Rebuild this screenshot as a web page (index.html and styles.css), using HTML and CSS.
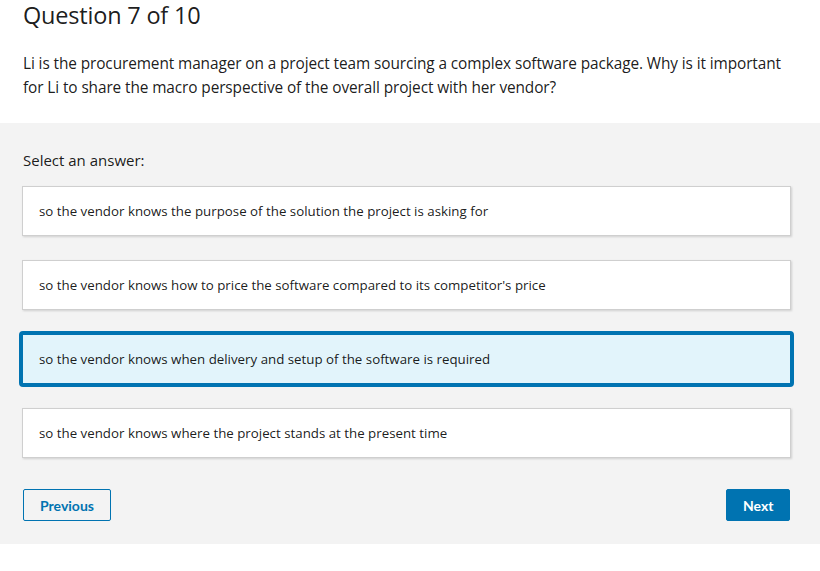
FILE: index.html
```html
<!DOCTYPE html>
<html>
<head>
<meta charset="utf-8">
<link rel="stylesheet" href="styles.css">
</head>
<body>
<header class="head">
  <h1 class="title">Question 7 of 10</h1>
  <p class="question">Li is the procurement manager on a project team sourcing a complex software package. Why is it important for Li to share the macro perspective of the overall project with her vendor?</p>
</header>
<section class="answers">
  <div class="prompt">Select an answer:</div>
  <ul class="options">
    <li class="option">so the vendor knows the purpose of the solution the project is asking for</li>
    <li class="option">so the vendor knows how to price the software compared to its competitor's price</li>
    <li class="option selected">so the vendor knows when delivery and setup of the software is required</li>
    <li class="option">so the vendor knows where the project stands at the present time</li>
  </ul>
  <div class="nav">
    <button class="btn btn-prev">Previous</button>
    <button class="btn btn-next">Next</button>
  </div>
</section>
</body>
</html>
```
FILE: styles.css
```css
html, body {
  margin: 0;
  padding: 0;
  background: #ffffff;
}
body {
  font-family: "Open Sans", "Noto Sans", sans-serif;
  color: rgba(0, 0, 0, 0.9);
  width: 820px;
  height: 571px;
  overflow: hidden;
}
.head {
  padding: 2px 29px 0 23px;
  height: 123px;
  box-sizing: border-box;
}
.title {
  margin: 0;
  font-size: 23.5px;
  font-weight: 400;
  line-height: 26px;
  letter-spacing: -0.2px;
}
.question {
  margin: 24px 0 0 0;
  font-size: 15.4px;
  line-height: 24px;
  letter-spacing: -0.1px;
}
.answers {
  background: #f3f3f3;
  padding: 23px 29px 23px 22px;
  height: 421px;
  box-sizing: border-box;
}
.prompt {
  font-size: 15px;
  line-height: 28px;
  margin: 0 0 12px 1px;
}
.options {
  list-style: none;
  margin: 0;
  padding: 0;
  display: flex;
  flex-direction: column;
  gap: 24px;
}
.option {
  height: 50px;
  box-sizing: border-box;
  background: #ffffff;
  border: 1px solid #cfcfcf;
  box-shadow: 1px 1px 2px rgba(0, 0, 0, 0.15);
  display: flex;
  align-items: center;
  padding: 0 16px;
  font-size: 13.3px;
}
.option.selected {
  background: #e2f4fb;
  border: 4px solid #0073b1;
  border-radius: 4px;
  margin: -3px;
  height: 56px;
  padding: 0 16px;
  box-shadow: none;
}
.nav {
  display: flex;
  justify-content: space-between;
  margin-top: 31px;
  padding-left: 1px;
  padding-right: 1px;
}
.btn {
  font-family: "Lato", "Open Sans", sans-serif;
  font-weight: 700;
  font-size: 14px;
  height: 32px;
  border-radius: 2px;
  padding: 0 16px;
  cursor: pointer;
}
.btn-prev {
  background: transparent;
  color: #0073b1;
  border: 1px solid #0073b1;
  width: 88px;
}
.btn-next {
  background: #0073b1;
  color: #ffffff;
  border: 1px solid #0073b1;
  width: 64px;
}
```
